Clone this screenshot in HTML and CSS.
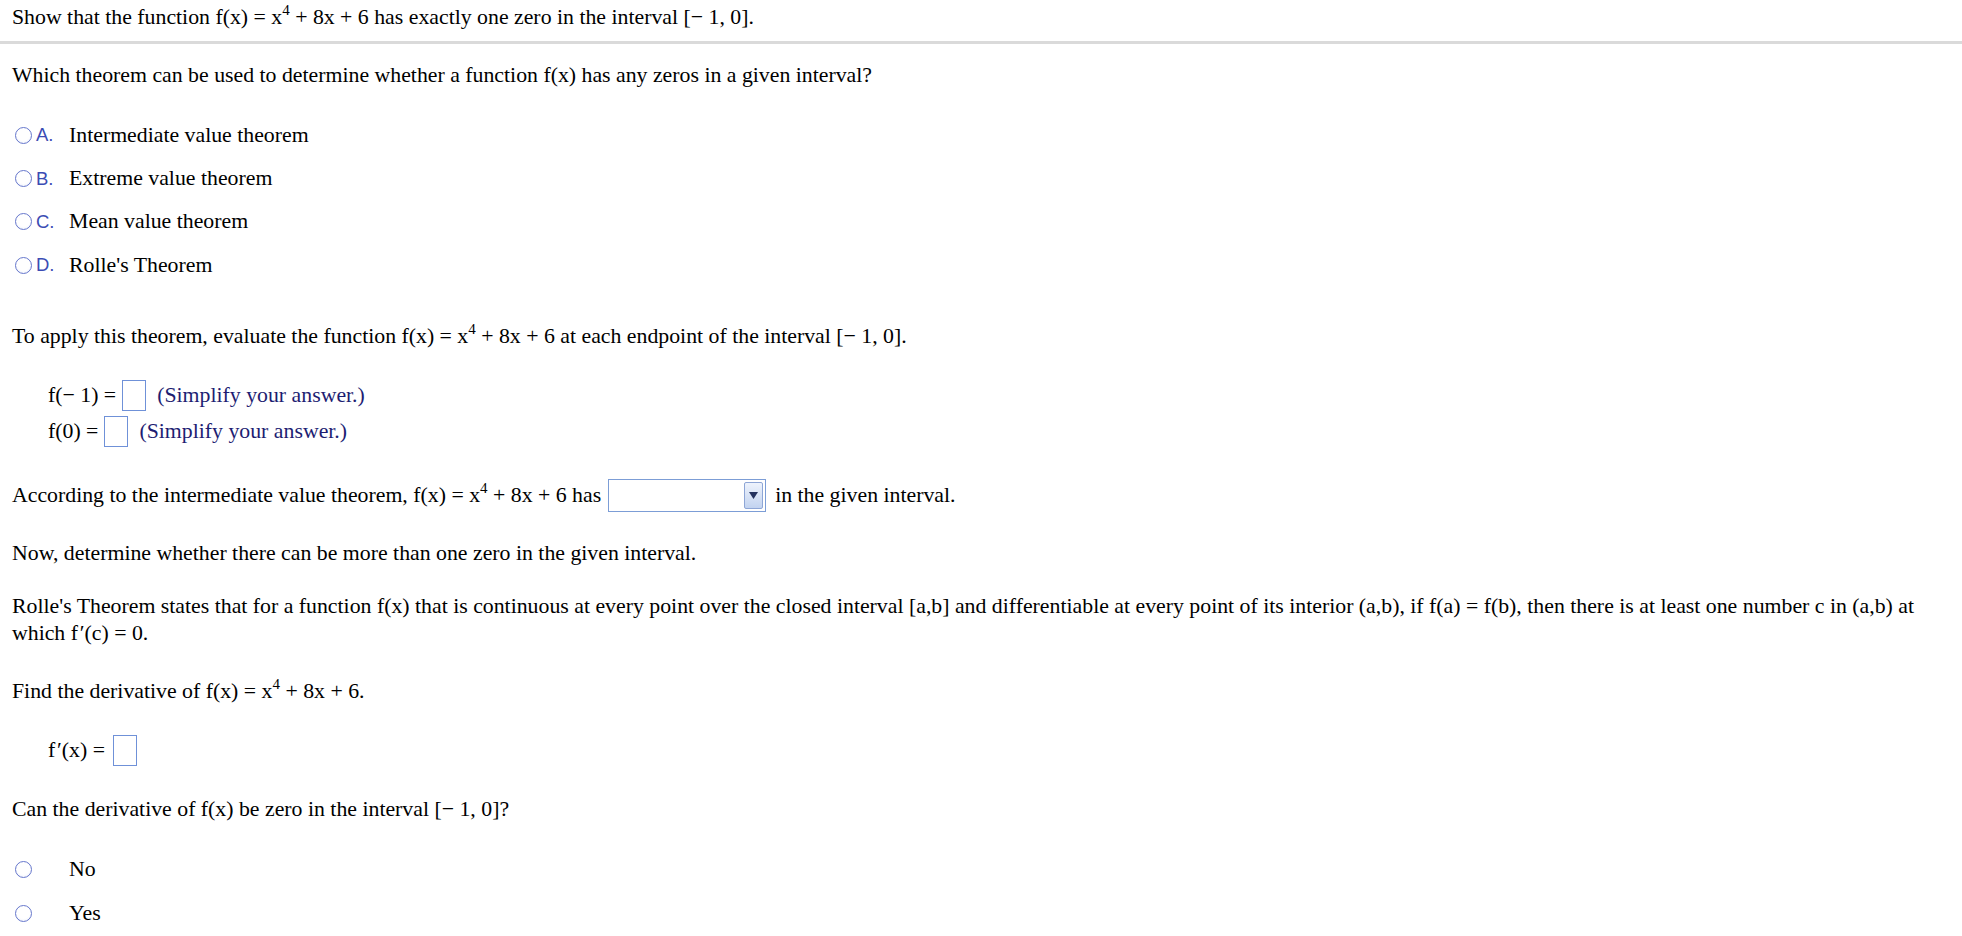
FILE: index.html
```html
<!DOCTYPE html>
<html>
<head>
<meta charset="utf-8">
<link rel="stylesheet" href="styles.css">
</head>
<body>
<div class="header">Show that the function <span class="m">f(x) = x<sup class="sup">4</sup> + 8x + 6</span> has exactly one zero in the interval <span class="m">[− 1, 0]</span>.</div>
<div class="content">
  <p class="line q1">Which theorem can be used to determine whether a function f(x) has any zeros in a given interval?</p>
  <div class="options">
    <div class="opt"><span class="radio"></span><span class="letter">A.</span><span class="otext">Intermediate value theorem</span></div>
    <div class="opt"><span class="radio"></span><span class="letter">B.</span><span class="otext">Extreme value theorem</span></div>
    <div class="opt"><span class="radio"></span><span class="letter">C.</span><span class="otext">Mean value theorem</span></div>
    <div class="opt"><span class="radio"></span><span class="letter">D.</span><span class="otext">Rolle's Theorem</span></div>
  </div>
  <p class="line g36">To apply this theorem, evaluate the function <span class="m">f(x) = x<sup class="sup">4</sup> + 8x + 6</span> at each endpoint of the interval <span class="m">[− 1, 0]</span>.</p>
  <div class="eqs">
    <div class="eq"><span class="m">f(− 1) =</span><span class="box"></span><span class="hint">(Simplify your answer.)</span></div>
    <div class="eq"><span class="m">f(0) =</span><span class="box"></span><span class="hint">(Simplify your answer.)</span></div>
  </div>
  <div class="row g28"><span>According to the intermediate value theorem, <span class="m">f(x) = x<sup class="sup">4</sup> + 8x + 6</span> has</span><span class="select"><span class="arrow"><svg width="9" height="7" viewBox="0 0 9 7"><path d="M0 0 H9 L4.5 7 Z" fill="#24325e"/></svg></span></span><span>in the given interval.</span></div>
  <p class="line g26">Now, determine whether there can be more than one zero in the given interval.</p>
  <p class="line g26">Rolle's Theorem states that for a function f(x) that is continuous at every point over the closed interval [a,b] and differentiable at every point of its interior (a,b), if f(a) = f(b), then there is at least one number c in (a,b) at which f&#8202;′(c) = 0.</p>
  <p class="line g31">Find the derivative of <span class="m">f(x) = x<sup class="sup">4</sup> + 8x + 6</span>.</p>
  <div class="eqs g27">
    <div class="eq"><span class="m">f&#8202;′(x) =</span><span class="box wide"></span></div>
  </div>
  <p class="line g28">Can the derivative of f(x) be zero in the interval <span class="m">[− 1, 0]</span>?</p>
  <div class="options g25">
    <div class="opt"><span class="radio"></span><span class="blank"></span><span class="otext">No</span></div>
    <div class="opt"><span class="radio"></span><span class="blank"></span><span class="otext">Yes</span></div>
  </div>
</div>
</body>
</html>
```
FILE: styles.css
```css
body {
  margin: 0;
  font-family: "Liberation Serif", "Times New Roman", serif;
  font-size: 21.8px;
  color: #000;
  background: #fff;
}
.header {
  height: 41px;
  line-height: 34px;
  padding: 0 12px;
  border-bottom: 3px solid #dadada;
  white-space: nowrap;
}
.sup {
  font-size: 15px;
  line-height: 0;
  vertical-align: 9px;
}
.content {
  padding: 18px 12px 0 12px;
}
.line {
  margin: 0;
  line-height: 27px;
}
.options {
  margin-top: 24.5px;
}
.opt {
  height: 43.4px;
  display: flex;
  align-items: center;
}
.radio {
  width: 15px;
  height: 15px;
  border: 1.8px solid #6677cc;
  border-radius: 50%;
  background: radial-gradient(circle at 50% 40%, #ffffff 55%, #e6eaf8 100%);
  margin-left: 3px;
  flex: none;
}
.letter {
  font-family: "Liberation Sans", Arial, sans-serif;
  font-size: 18.5px;
  color: #3b4cb4;
  margin-left: 4px;
  width: 33px;
}
.blank {
  width: 37px;
}
.otext {
  line-height: 27px;
}
.g36 { margin-top: 36px; }
.g28 { margin-top: 28px; }
.g26 { margin-top: 26px; }
.g31 { margin-top: 31px; }
.g27 { margin-top: 27px; }
.g25 { margin-top: 25px; }
.eqs {
  margin-top: 27.5px;
  padding-left: 36px;
}
.eqs.g27 { margin-top: 27.5px; }
.eq {
  height: 36px;
  display: flex;
  align-items: center;
}
.box {
  width: 22px;
  height: 29px;
  border: 1px solid #6f91d8;
  margin-left: 6px;
  background: #fff;
}
.box.wide {
  margin-left: 8px;
}
.hint {
  color: #1d1d72;
  margin-left: 11px;
}
.row {
  height: 36px;
  display: flex;
  align-items: center;
}
.select {
  position: relative;
  width: 156px;
  height: 31px;
  border: 1px solid #7c9dd6;
  margin: 0 9px 0 7px;
  background: #fff;
  flex: none;
}
.arrow {
  position: absolute;
  right: 2px;
  top: 2px;
  width: 17px;
  height: 25px;
  border: 1px solid #8ea6d6;
  border-radius: 2px;
  background: linear-gradient(#eef3fc, #c2d3f0);
  display: flex;
  align-items: center;
  justify-content: center;
}
.arrow svg {
  display: block;
}
```
